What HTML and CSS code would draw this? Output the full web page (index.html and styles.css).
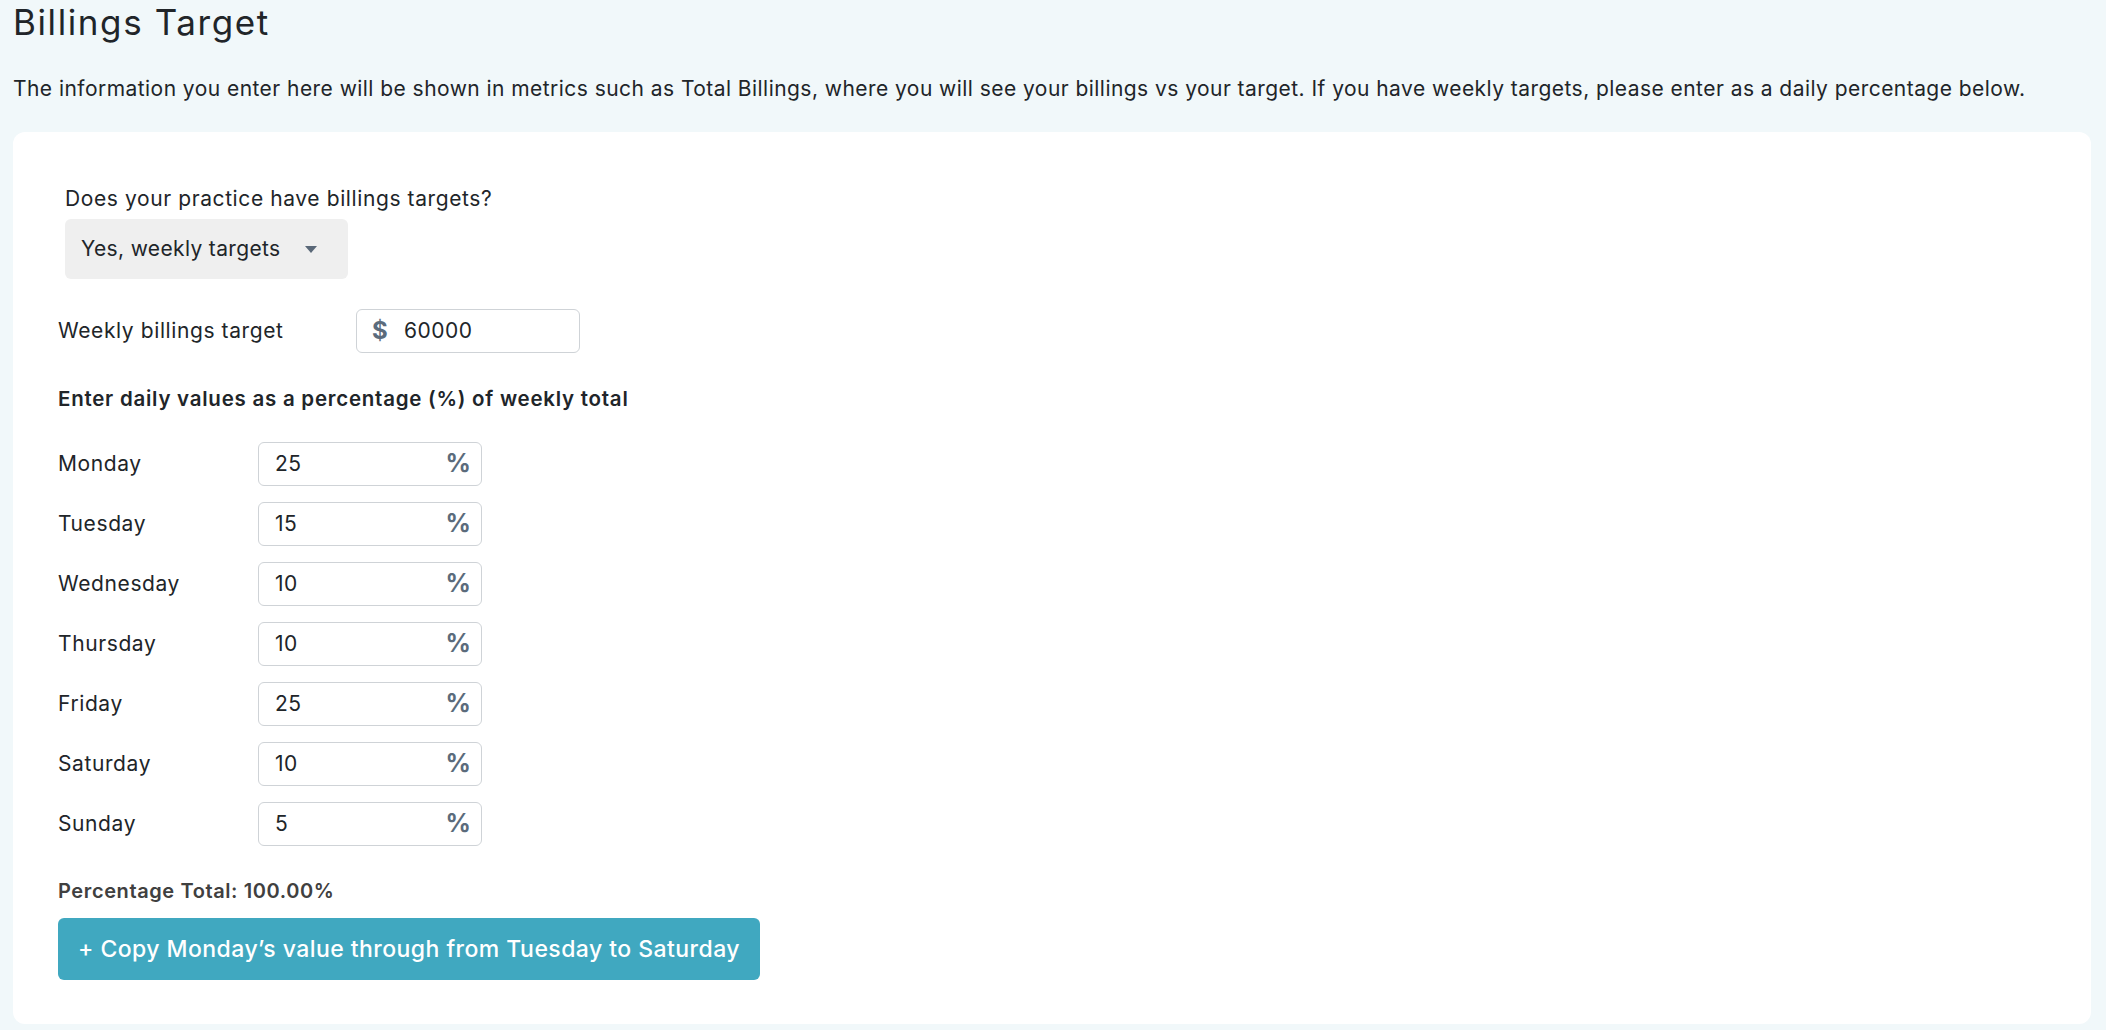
FILE: index.html
```html
<!DOCTYPE html>
<html>
<head>
	<meta charset="utf-8">
	<title>Billings Target</title>
	<link rel="stylesheet" href="styles.css">
</head>
<body>
	<div class="page">
		<h1 class="title">Billings Target</h1>
		<p class="intro">The information you enter here will be shown in metrics such as Total Billings, where you will see your billings vs your target. If you have weekly targets, please enter as a daily percentage below.</p>

		<div class="card">
			<div class="question">
				<label class="question-label">Does your practice have billings targets?</label>
				<div class="select">
					<span>Yes, weekly targets</span>
					<span class="caret"></span>
				</div>
			</div>

			<div class="field-row weekly">
				<label class="field-label">Weekly billings target</label>
				<div class="input-box">
					<span class="prefix">$</span>
					<input class="input-text" type="text" name="weekly" value="60000">
				</div>
			</div>

			<h3 class="section-title">Enter daily values as a percentage (%) of weekly total</h3>

			<div class="day-list">
				<div class="field-row day">
					<label class="field-label">Monday</label>
					<div class="input-box">
						<input class="input-text" type="text" name="monday" value="25">
						<span class="suffix">%</span>
					</div>
				</div>
				<div class="field-row day">
					<label class="field-label">Tuesday</label>
					<div class="input-box">
						<input class="input-text" type="text" name="tuesday" value="15">
						<span class="suffix">%</span>
					</div>
				</div>
				<div class="field-row day">
					<label class="field-label">Wednesday</label>
					<div class="input-box">
						<input class="input-text" type="text" name="wednesday" value="10">
						<span class="suffix">%</span>
					</div>
				</div>
				<div class="field-row day">
					<label class="field-label">Thursday</label>
					<div class="input-box">
						<input class="input-text" type="text" name="thursday" value="10">
						<span class="suffix">%</span>
					</div>
				</div>
				<div class="field-row day">
					<label class="field-label">Friday</label>
					<div class="input-box">
						<input class="input-text" type="text" name="friday" value="25">
						<span class="suffix">%</span>
					</div>
				</div>
				<div class="field-row day">
					<label class="field-label">Saturday</label>
					<div class="input-box">
						<input class="input-text" type="text" name="saturday" value="10">
						<span class="suffix">%</span>
					</div>
				</div>
				<div class="field-row day">
					<label class="field-label">Sunday</label>
					<div class="input-box">
						<input class="input-text" type="text" name="sunday" value="5">
						<span class="suffix">%</span>
					</div>
				</div>
			</div>

			<div class="total">Percentage Total: 100.00%</div>

			<button class="copy-btn" type="button">+ Copy Monday’s value through from Tuesday to Saturday</button>
		</div>
	</div>
</body>
</html>
```

FILE: styles.css
```css
body{
	margin: 0;
	background-color: #f1f8fa;
	color: #212529;
	font: 21px/31.5px Inter, "Noto Sans", sans-serif;
	letter-spacing: 0.6px;
}
.page{
	padding: 1px 15px 7px 13px;
}
.title{
	margin: 0;
	font-size: 35px;
	line-height: 43px;
	font-weight: 400;
	letter-spacing: 1.6px;
}
.intro{
	margin: 29px 0 0 0;
	letter-spacing: 0.45px;
}

/* white card */
.card{
	margin-top: 27px;
	padding: 51px 45px 44px 45px;
	background-color: #fff;
	border-radius: 12px;
}
.question{
	padding-left: 7px;
}
.question-label{
	display: block;
}
.select{
	display: inline-flex;
	align-items: center;
	justify-content: space-between;
	box-sizing: border-box;
	width: 283px;
	height: 60px;
	margin-top: 5px;
	padding: 0 31px 0 16px;
	background-color: #efefef;
	border-radius: 6px;
	letter-spacing: 0.35px;
}
.caret{
	width: 0;
	height: 0;
	border-left: 6px solid transparent;
	border-right: 6px solid transparent;
	border-top: 7px solid #5a6878;
}

/* label + input rows */
.field-row{
	display: flex;
	align-items: center;
	height: 44px;
}
.field-row.weekly{
	margin-top: 30px;
}
.weekly .field-label{
	width: 298px;
}
.day .field-label{
	width: 200px;
}
.input-box{
	display: flex;
	align-items: center;
	box-sizing: border-box;
	width: 224px;
	height: 44px;
	padding: 0 10px 0 15px;
	border: 1px solid #cfd3d7;
	border-radius: 6px;
}
.input-text{
	flex: 1;
	min-width: 0;
	height: 30px;
	padding: 0;
	border: none;
	outline: none;
	background: transparent;
	font: inherit;
	color: #212529;
	letter-spacing: 0.5px;
}
.prefix{
	width: 16px;
	margin-right: 16px;
	font-size: 24px;
	font-weight: 700;
	color: #5b6b7c;
}
.day .input-text{
	padding-left: 1px;
}
.suffix{
	font-size: 25px;
	font-weight: 700;
	color: #5b6b7c;
	letter-spacing: 0;
}

.section-title{
	margin: 31px 0 0 0;
	font-size: 20.5px;
	line-height: 30px;
	font-weight: 600;
	letter-spacing: 0.75px;
}
.day-list{
	display: flex;
	flex-direction: column;
	gap: 16px;
	margin-top: 28px;
}
.total{
	margin-top: 30px;
	font-size: 20px;
	line-height: 30px;
	font-weight: 600;
	color: #404040;
}
.copy-btn{
	display: block;
	height: 62px;
	margin-top: 12px;
	padding: 0 20px;
	border: none;
	border-radius: 6px;
	background-color: #40a8c0;
	color: #fff;
	font: 500 23px Inter, "Noto Sans", sans-serif;
	letter-spacing: 0.45px;
}
```
